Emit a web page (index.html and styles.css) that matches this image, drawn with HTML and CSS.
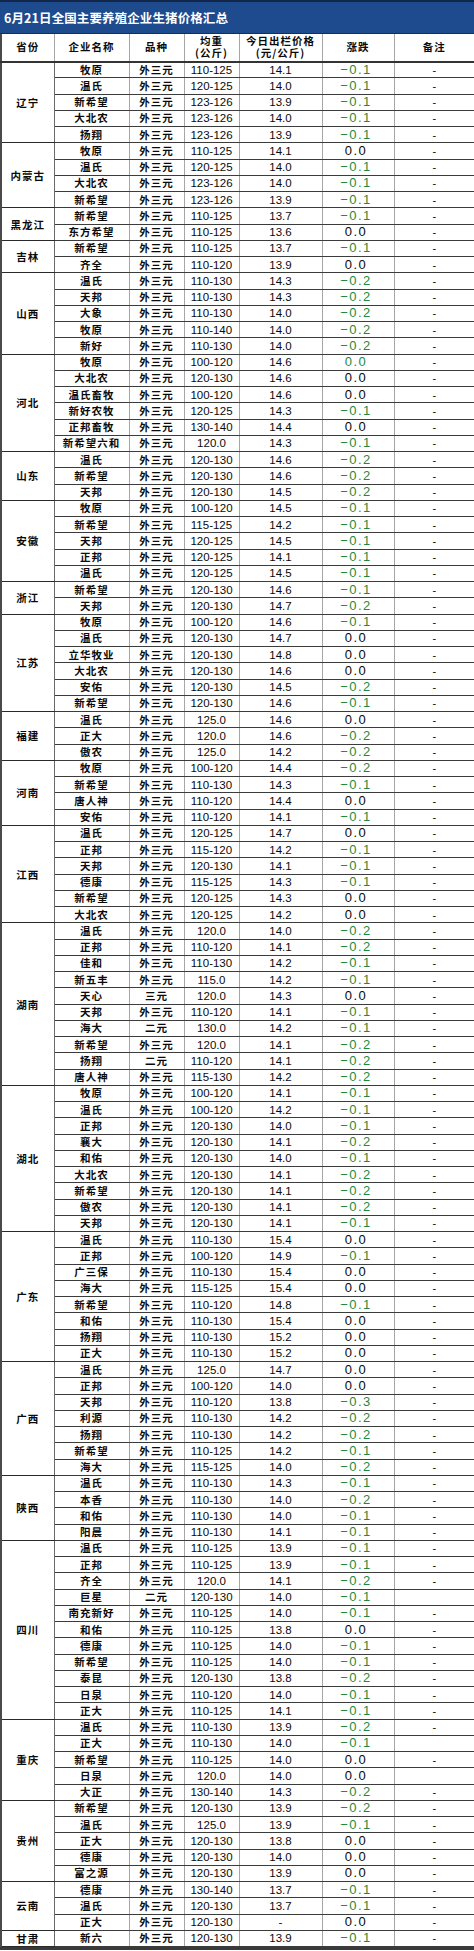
FILE: index.html
```html
<!DOCTYPE html>
<html lang="zh-CN">
<head>
<meta charset="utf-8">
<title>6月21日全国主要养殖企业生猪价格汇总</title>
<link rel="stylesheet" href="styles.css">
</head>
<body>
<div class="sheet">
<div class="title">6月21日全国主要养殖企业生猪价格汇总</div>
<table class="grid">
<colgroup><col class="c1"><col class="c2"><col class="c3"><col class="c4"><col class="c5"><col class="c6"><col class="c7"></colgroup>
<thead>
<tr><th>省份</th><th>企业名称</th><th>品种</th><th>均重<br>(公斤)</th><th>今日出栏价格<br>(元/公斤)</th><th>涨跌</th><th>备注</th></tr>
</thead>
<tbody>
<tr class="gs"><th rowspan="5">辽宁</th><td>牧原</td><td>外三元</td><td>110-125</td><td>14.1</td><td class="g">−0.1</td><td>-</td></tr>
<tr><td>温氏</td><td>外三元</td><td>120-125</td><td>14.0</td><td class="g">−0.1</td><td>-</td></tr>
<tr><td>新希望</td><td>外三元</td><td>123-126</td><td>13.9</td><td class="g">−0.1</td><td>-</td></tr>
<tr><td>大北农</td><td>外三元</td><td>123-126</td><td>14.0</td><td class="g">−0.1</td><td>-</td></tr>
<tr><td>扬翔</td><td>外三元</td><td>123-126</td><td>13.9</td><td class="g">−0.1</td><td>-</td></tr>

<tr class="gs"><th rowspan="4">内蒙古</th><td>牧原</td><td>外三元</td><td>110-125</td><td>14.1</td><td>0.0</td><td>-</td></tr>
<tr><td>温氏</td><td>外三元</td><td>120-125</td><td>14.0</td><td class="g">−0.1</td><td>-</td></tr>
<tr><td>大北农</td><td>外三元</td><td>123-126</td><td>14.0</td><td class="g">−0.1</td><td>-</td></tr>
<tr><td>新希望</td><td>外三元</td><td>123-126</td><td>13.9</td><td class="g">−0.1</td><td>-</td></tr>

<tr class="gs"><th rowspan="2">黑龙江</th><td>新希望</td><td>外三元</td><td>110-125</td><td>13.7</td><td class="g">−0.1</td><td>-</td></tr>
<tr><td>东方希望</td><td>外三元</td><td>110-125</td><td>13.6</td><td>0.0</td><td>-</td></tr>

<tr class="gs"><th rowspan="2">吉林</th><td>新希望</td><td>外三元</td><td>110-125</td><td>13.7</td><td class="g">−0.1</td><td>-</td></tr>
<tr><td>齐全</td><td>外三元</td><td>110-120</td><td>13.9</td><td>0.0</td><td>-</td></tr>

<tr class="gs"><th rowspan="5">山西</th><td>温氏</td><td>外三元</td><td>110-130</td><td>14.3</td><td class="g">−0.2</td><td>-</td></tr>
<tr><td>天邦</td><td>外三元</td><td>110-130</td><td>14.3</td><td class="g">−0.2</td><td>-</td></tr>
<tr><td>大象</td><td>外三元</td><td>110-130</td><td>14.0</td><td class="g">−0.2</td><td>-</td></tr>
<tr><td>牧原</td><td>外三元</td><td>110-140</td><td>14.0</td><td class="g">−0.2</td><td>-</td></tr>
<tr><td>新好</td><td>外三元</td><td>110-130</td><td>14.0</td><td class="g">−0.2</td><td>-</td></tr>

<tr class="gs"><th rowspan="6">河北</th><td>牧原</td><td>外三元</td><td>100-120</td><td>14.6</td><td class="g">0.0</td><td>-</td></tr>
<tr><td>大北农</td><td>外三元</td><td>120-130</td><td>14.6</td><td>0.0</td><td>-</td></tr>
<tr><td>温氏畜牧</td><td>外三元</td><td>100-120</td><td>14.6</td><td>0.0</td><td>-</td></tr>
<tr><td>新好农牧</td><td>外三元</td><td>120-125</td><td>14.3</td><td class="g">−0.1</td><td>-</td></tr>
<tr><td>正邦畜牧</td><td>外三元</td><td>130-140</td><td>14.4</td><td>0.0</td><td>-</td></tr>
<tr><td>新希望六和</td><td>外三元</td><td>120.0</td><td>14.3</td><td class="g">−0.1</td><td>-</td></tr>

<tr class="gs"><th rowspan="3">山东</th><td>温氏</td><td>外三元</td><td>120-130</td><td>14.6</td><td class="g">−0.2</td><td>-</td></tr>
<tr><td>新希望</td><td>外三元</td><td>120-130</td><td>14.6</td><td class="g">−0.2</td><td>-</td></tr>
<tr><td>天邦</td><td>外三元</td><td>120-130</td><td>14.5</td><td class="g">−0.2</td><td>-</td></tr>

<tr class="gs"><th rowspan="5">安徽</th><td>牧原</td><td>外三元</td><td>100-120</td><td>14.5</td><td class="g">−0.1</td><td>-</td></tr>
<tr><td>新希望</td><td>外三元</td><td>115-125</td><td>14.2</td><td class="g">−0.1</td><td>-</td></tr>
<tr><td>天邦</td><td>外三元</td><td>120-125</td><td>14.5</td><td class="g">−0.1</td><td>-</td></tr>
<tr><td>正邦</td><td>外三元</td><td>120-125</td><td>14.1</td><td class="g">−0.1</td><td>-</td></tr>
<tr><td>温氏</td><td>外三元</td><td>120-125</td><td>14.5</td><td class="g">−0.1</td><td>-</td></tr>

<tr class="gs"><th rowspan="2">浙江</th><td>新希望</td><td>外三元</td><td>120-130</td><td>14.6</td><td class="g">−0.1</td><td>-</td></tr>
<tr><td>天邦</td><td>外三元</td><td>120-130</td><td>14.7</td><td class="g">−0.2</td><td>-</td></tr>

<tr class="gs"><th rowspan="6">江苏</th><td>牧原</td><td>外三元</td><td>100-120</td><td>14.6</td><td class="g">−0.1</td><td>-</td></tr>
<tr><td>温氏</td><td>外三元</td><td>120-130</td><td>14.7</td><td>0.0</td><td>-</td></tr>
<tr><td>立华牧业</td><td>外三元</td><td>120-130</td><td>14.8</td><td>0.0</td><td>-</td></tr>
<tr><td>大北农</td><td>外三元</td><td>120-130</td><td>14.6</td><td>0.0</td><td>-</td></tr>
<tr><td>安佑</td><td>外三元</td><td>120-130</td><td>14.5</td><td class="g">−0.2</td><td>-</td></tr>
<tr><td>新希望</td><td>外三元</td><td>120-130</td><td>14.6</td><td class="g">−0.1</td><td>-</td></tr>

<tr class="gs"><th rowspan="3">福建</th><td>温氏</td><td>外三元</td><td>125.0</td><td>14.6</td><td>0.0</td><td>-</td></tr>
<tr><td>正大</td><td>外三元</td><td>120.0</td><td>14.6</td><td class="g">−0.2</td><td>-</td></tr>
<tr><td>傲农</td><td>外三元</td><td>125.0</td><td>14.2</td><td class="g">−0.2</td><td>-</td></tr>

<tr class="gs"><th rowspan="4">河南</th><td>牧原</td><td>外三元</td><td>100-120</td><td>14.4</td><td class="g">−0.2</td><td>-</td></tr>
<tr><td>新希望</td><td>外三元</td><td>110-130</td><td>14.3</td><td class="g">−0.1</td><td>-</td></tr>
<tr><td>唐人神</td><td>外三元</td><td>110-120</td><td>14.4</td><td>0.0</td><td>-</td></tr>
<tr><td>安佑</td><td>外三元</td><td>110-120</td><td>14.1</td><td class="g">−0.1</td><td>-</td></tr>

<tr class="gs"><th rowspan="6">江西</th><td>温氏</td><td>外三元</td><td>120-125</td><td>14.7</td><td>0.0</td><td>-</td></tr>
<tr><td>正邦</td><td>外三元</td><td>115-120</td><td>14.2</td><td class="g">−0.1</td><td>-</td></tr>
<tr><td>天邦</td><td>外三元</td><td>120-130</td><td>14.1</td><td class="g">−0.1</td><td>-</td></tr>
<tr><td>德康</td><td>外三元</td><td>115-125</td><td>14.3</td><td class="g">−0.1</td><td>-</td></tr>
<tr><td>新希望</td><td>外三元</td><td>120-125</td><td>14.3</td><td>0.0</td><td>-</td></tr>
<tr><td>大北农</td><td>外三元</td><td>120-125</td><td>14.2</td><td>0.0</td><td>-</td></tr>

<tr class="gs"><th rowspan="10">湖南</th><td>温氏</td><td>外三元</td><td>120.0</td><td>14.0</td><td class="g">−0.2</td><td>-</td></tr>
<tr><td>正邦</td><td>外三元</td><td>110-120</td><td>14.1</td><td class="g">−0.2</td><td>-</td></tr>
<tr><td>佳和</td><td>外三元</td><td>110-130</td><td>14.2</td><td class="g">−0.1</td><td>-</td></tr>
<tr><td>新五丰</td><td>外三元</td><td>115.0</td><td>14.2</td><td class="g">−0.1</td><td>-</td></tr>
<tr><td>天心</td><td>三元</td><td>120.0</td><td>14.3</td><td>0.0</td><td>-</td></tr>
<tr><td>天邦</td><td>外三元</td><td>110-120</td><td>14.1</td><td class="g">−0.1</td><td>-</td></tr>
<tr><td>海大</td><td>二元</td><td>130.0</td><td>14.2</td><td class="g">−0.1</td><td>-</td></tr>
<tr><td>新希望</td><td>外三元</td><td>120.0</td><td>14.1</td><td class="g">−0.2</td><td>-</td></tr>
<tr><td>扬翔</td><td>二元</td><td>110-120</td><td>14.1</td><td class="g">−0.2</td><td>-</td></tr>
<tr><td>唐人神</td><td>外三元</td><td>115-130</td><td>14.2</td><td class="g">−0.2</td><td>-</td></tr>

<tr class="gs"><th rowspan="9">湖北</th><td>牧原</td><td>外三元</td><td>100-120</td><td>14.1</td><td class="g">−0.1</td><td>-</td></tr>
<tr><td>温氏</td><td>外三元</td><td>100-120</td><td>14.2</td><td class="g">−0.1</td><td>-</td></tr>
<tr><td>正邦</td><td>外三元</td><td>120-130</td><td>14.0</td><td class="g">−0.1</td><td>-</td></tr>
<tr><td>襄大</td><td>外三元</td><td>120-130</td><td>14.1</td><td class="g">−0.2</td><td>-</td></tr>
<tr><td>和佑</td><td>外三元</td><td>120-130</td><td>14.0</td><td class="g">−0.1</td><td>-</td></tr>
<tr><td>大北农</td><td>外三元</td><td>120-130</td><td>14.1</td><td class="g">−0.2</td><td>-</td></tr>
<tr><td>新希望</td><td>外三元</td><td>120-130</td><td>14.1</td><td class="g">−0.2</td><td>-</td></tr>
<tr><td>傲农</td><td>外三元</td><td>120-130</td><td>14.1</td><td class="g">−0.2</td><td>-</td></tr>
<tr><td>天邦</td><td>外三元</td><td>120-130</td><td>14.1</td><td class="g">−0.1</td><td>-</td></tr>

<tr class="gs"><th rowspan="8">广东</th><td>温氏</td><td>外三元</td><td>110-130</td><td>15.4</td><td>0.0</td><td>-</td></tr>
<tr><td>正邦</td><td>外三元</td><td>100-120</td><td>14.9</td><td class="g">−0.1</td><td>-</td></tr>
<tr><td>广三保</td><td>外三元</td><td>110-130</td><td>15.4</td><td>0.0</td><td>-</td></tr>
<tr><td>海大</td><td>外三元</td><td>115-125</td><td>15.4</td><td>0.0</td><td>-</td></tr>
<tr><td>新希望</td><td>外三元</td><td>110-120</td><td>14.8</td><td class="g">−0.1</td><td>-</td></tr>
<tr><td>和佑</td><td>外三元</td><td>110-130</td><td>15.4</td><td>0.0</td><td>-</td></tr>
<tr><td>扬翔</td><td>外三元</td><td>110-130</td><td>15.2</td><td>0.0</td><td>-</td></tr>
<tr><td>正大</td><td>外三元</td><td>110-130</td><td>15.2</td><td>0.0</td><td>-</td></tr>

<tr class="gs"><th rowspan="7">广西</th><td>温氏</td><td>外三元</td><td>125.0</td><td>14.7</td><td>0.0</td><td>-</td></tr>
<tr><td>正邦</td><td>外三元</td><td>100-120</td><td>14.0</td><td>0.0</td><td>-</td></tr>
<tr><td>天邦</td><td>外三元</td><td>110-120</td><td>13.8</td><td class="g">−0.3</td><td>-</td></tr>
<tr><td>利源</td><td>外三元</td><td>110-130</td><td>14.2</td><td class="g">−0.2</td><td>-</td></tr>
<tr><td>扬翔</td><td>外三元</td><td>110-130</td><td>14.2</td><td class="g">−0.2</td><td>-</td></tr>
<tr><td>新希望</td><td>外三元</td><td>110-125</td><td>14.2</td><td class="g">−0.1</td><td>-</td></tr>
<tr><td>海大</td><td>外三元</td><td>115-125</td><td>14.0</td><td class="g">−0.2</td><td>-</td></tr>

<tr class="gs"><th rowspan="4">陕西</th><td>温氏</td><td>外三元</td><td>110-130</td><td>14.3</td><td class="g">−0.1</td><td>-</td></tr>
<tr><td>本香</td><td>外三元</td><td>110-130</td><td>14.0</td><td class="g">−0.2</td><td>-</td></tr>
<tr><td>和佑</td><td>外三元</td><td>110-130</td><td>14.0</td><td class="g">−0.1</td><td>-</td></tr>
<tr><td>阳晨</td><td>外三元</td><td>110-130</td><td>14.1</td><td class="g">−0.1</td><td>-</td></tr>

<tr class="gs"><th rowspan="11">四川</th><td>温氏</td><td>外三元</td><td>110-125</td><td>13.9</td><td class="g">−0.1</td><td>-</td></tr>
<tr><td>正邦</td><td>外三元</td><td>110-125</td><td>13.9</td><td class="g">−0.1</td><td>-</td></tr>
<tr><td>齐全</td><td>外三元</td><td>120.0</td><td>14.1</td><td class="g">−0.2</td><td>-</td></tr>
<tr><td>巨星</td><td>二元</td><td>120-130</td><td>14.0</td><td class="g">−0.1</td><td></td></tr>
<tr><td>南充新好</td><td>外三元</td><td>110-125</td><td>14.0</td><td class="g">−0.1</td><td>-</td></tr>
<tr><td>和佑</td><td>外三元</td><td>110-125</td><td>13.8</td><td>0.0</td><td>-</td></tr>
<tr><td>德康</td><td>外三元</td><td>110-125</td><td>14.0</td><td class="g">−0.1</td><td>-</td></tr>
<tr><td>新希望</td><td>外三元</td><td>110-125</td><td>14.0</td><td class="g">−0.1</td><td>-</td></tr>
<tr><td>泰昆</td><td>外三元</td><td>120-130</td><td>13.8</td><td class="g">−0.2</td><td>-</td></tr>
<tr><td>日泉</td><td>外三元</td><td>110-120</td><td>14.0</td><td class="g">−0.1</td><td>-</td></tr>
<tr><td>正大</td><td>外三元</td><td>110-125</td><td>14.1</td><td class="g">−0.1</td><td>-</td></tr>

<tr class="gs"><th rowspan="5">重庆</th><td>温氏</td><td>外三元</td><td>110-130</td><td>13.9</td><td class="g">−0.2</td><td>-</td></tr>
<tr><td>正大</td><td>外三元</td><td>110-130</td><td>14.0</td><td class="g">−0.1</td><td></td></tr>
<tr><td>新希望</td><td>外三元</td><td>110-125</td><td>14.0</td><td>0.0</td><td>-</td></tr>
<tr><td>日泉</td><td>外三元</td><td>120.0</td><td>14.0</td><td>0.0</td><td></td></tr>
<tr><td>大正</td><td>外三元</td><td>130-140</td><td>14.3</td><td class="g">−0.2</td><td>-</td></tr>

<tr class="gs"><th rowspan="5">贵州</th><td>新希望</td><td>外三元</td><td>120-130</td><td>13.9</td><td class="g">−0.2</td><td>-</td></tr>
<tr><td>温氏</td><td>外三元</td><td>125.0</td><td>13.9</td><td class="g">−0.1</td><td>-</td></tr>
<tr><td>正大</td><td>外三元</td><td>120-130</td><td>13.8</td><td>0.0</td><td>-</td></tr>
<tr><td>德康</td><td>外三元</td><td>120-130</td><td>14.0</td><td>0.0</td><td>-</td></tr>
<tr><td>富之源</td><td>外三元</td><td>120-130</td><td>13.9</td><td>0.0</td><td>-</td></tr>

<tr class="gs"><th rowspan="3">云南</th><td>德康</td><td>外三元</td><td>130-140</td><td>13.7</td><td class="g">−0.1</td><td>-</td></tr>
<tr><td>温氏</td><td>外三元</td><td>120-130</td><td>13.7</td><td class="g">−0.1</td><td>-</td></tr>
<tr><td>正大</td><td>外三元</td><td>120-130</td><td>-</td><td>0.0</td><td>-</td></tr>

<tr class="gs"><th rowspan="1">甘肃</th><td>新六</td><td>外三元</td><td>120-130</td><td>13.9</td><td class="g">−0.1</td><td>-</td></tr>
</tbody>
</table>
</div>
</body>
</html>
```

FILE: styles.css
```css
html, body {
  margin: 0;
  padding: 0;
  background: #ffffff;
}

.sheet {
  width: 474px;
  border-bottom: 3px solid #3a3a3a;
  box-sizing: border-box;
}

.title {
  height: 34px;
  box-sizing: border-box;
  border-top: 2px solid #12264a;
  border-bottom: 1px solid #1a2c50;
  background: #1e4a8e;
  color: #ffffff;
  font-family: "Noto Sans CJK SC", "Liberation Sans", sans-serif;
  font-weight: 700;
  font-size: 12.5px;
  letter-spacing: 0.1px;
  line-height: 31px;
  padding-left: 4px;
  white-space: nowrap;
}

.grid {
  width: 474px;
  table-layout: fixed;
  border-collapse: collapse;
  border-left: 2px solid #4a4a4a;
  border-right: 2px solid #4a4a4a;
}

.c1 { width: 53px; }
.c2 { width: 75px; }
.c3 { width: 55px; }
.c4 { width: 55px; }
.c5 { width: 83px; }
.c6 { width: 72px; }
.c7 { width: 81px; }

.grid th,
.grid td {
  padding: 0;
  text-align: center;
  vertical-align: middle;
  color: #0a0a0a;
  border-left: 1px solid #a6a6a6;
  border-right: 1px solid #a6a6a6;
  border-bottom: 1px solid #3c3c3c;
  overflow: hidden;
  white-space: nowrap;
}

.grid thead tr {
  height: 27.5px;
}

.grid thead th {
  font-family: "Noto Sans CJK SC", "Liberation Sans", sans-serif;
  font-weight: 700;
  font-size: 10.5px;
  line-height: 12px;
  letter-spacing: 1px;
  border-bottom: 2px solid #333333;
}

.grid tbody tr {
  height: 16.25px;
}

.grid tbody th {
  font-family: "Noto Sans CJK SC", "Liberation Sans", sans-serif;
  font-weight: 700;
  font-size: 10.5px;
  letter-spacing: 1px;
  border-right: 1px solid #6a6a6a;
  border-bottom: 1px solid #2a2a2a;
}

.grid tbody td {
  font-family: "Liberation Sans", Arial, sans-serif;
  font-size: 11.5px;
  line-height: 14px;
}

.grid tbody td:nth-last-child(6),
.grid tbody td:nth-last-child(5) {
  font-family: "Noto Sans CJK SC", "Liberation Sans", sans-serif;
  font-weight: 700;
  font-size: 10.5px;
  letter-spacing: 1px;
}

.grid tbody td:nth-last-child(2) {
  font-size: 13px;
  letter-spacing: 1.5px;
  padding-right: 4px;
}

.grid tbody td:nth-last-child(1) {
  font-size: 11px;
}

.grid tbody td.g {
  color: #1f8a3b;
}
```
